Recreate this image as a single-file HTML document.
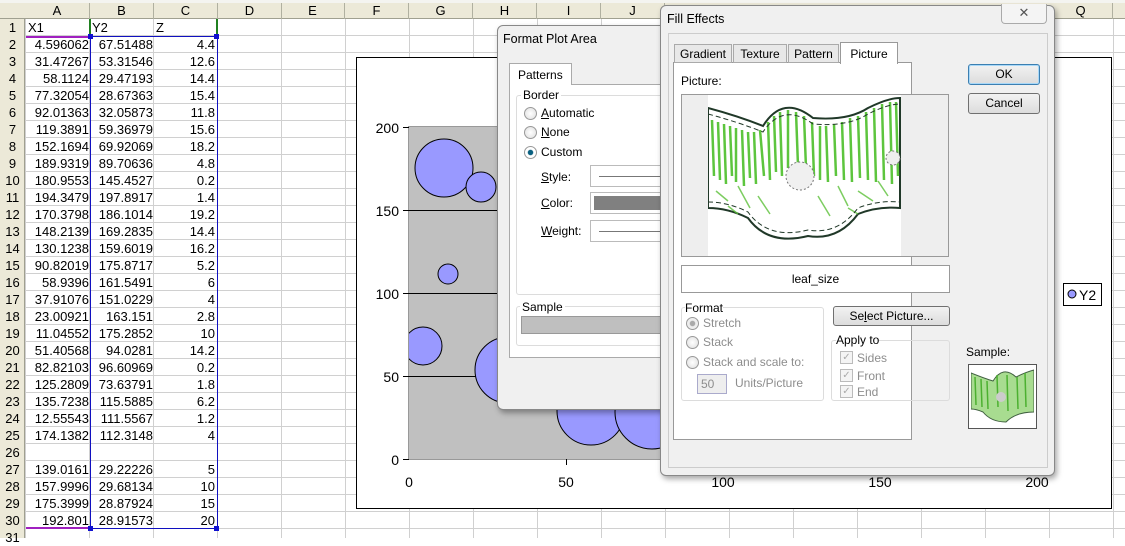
<!DOCTYPE html>
<html><head><meta charset="utf-8"><style>
*{margin:0;padding:0;box-sizing:border-box}
body{width:1125px;height:538px;overflow:hidden;background:#fff;position:relative;font-family:"Liberation Sans",sans-serif;}
.a{position:absolute}
.grid{left:0;top:0;width:1125px;height:538px;
background-image:repeating-linear-gradient(to bottom,transparent 0 1px,#d0d0d0 1px 2px,transparent 2px 17px),repeating-linear-gradient(to right,transparent 0 25px,#d0d0d0 25px 26px,transparent 26px 64px);}
.hdr{left:0;top:0;width:1125px;height:19px;background:#ece9d8;border-bottom:1px solid #a0a090;border-top:3px solid #f4f4f0}
.rh{left:0;top:19px;width:25px;height:519px;background:#ece9d8;border-right:1px solid #a0a090}
.ch{top:3px;height:16px;width:64px;text-align:center;font-size:13px;line-height:16px;color:#000;border-right:1px solid #b0b0a0}
.c{height:17px;font-size:13px;line-height:18px;text-align:right;white-space:nowrap}
.dlg{background:#f0f0f0;border:1px solid #888;border-radius:6px;box-shadow:2px 3px 6px rgba(0,0,0,.35)}
.t{font-size:12px;color:#000;white-space:nowrap}
.g{color:#8d8d8d}
.btn{border:1px solid #707070;border-radius:3px;background:linear-gradient(#f2f2f2,#dcdcdc);font-size:12px;text-align:center;line-height:18px}
.rad{width:13px;height:13px;border-radius:50%;border:1px solid #999;background:radial-gradient(#fff,#ddd)}
.chk{width:13px;height:13px;border:1px solid #bbb;background:#f4f4f4;font-size:10px;line-height:11px;text-align:center;color:#aaa}
.grp{border:1px solid #dcdcdc;border-radius:3px}
u{text-decoration:underline}
</style></head><body>
<div class="a grid"></div>
<div class="a hdr"></div>
<div class="a rh"></div>
<div class="a ch" style="left:25px;width:65px">A</div>
<div class="a ch" style="left:90px">B</div>
<div class="a ch" style="left:154px">C</div>
<div class="a ch" style="left:218px">D</div>
<div class="a ch" style="left:281px">E</div>
<div class="a ch" style="left:345px">F</div>
<div class="a ch" style="left:409px">G</div>
<div class="a ch" style="left:473px">H</div>
<div class="a ch" style="left:537px">I</div>
<div class="a ch" style="left:601px">J</div>
<div class="a ch" style="left:1049px">Q</div>
<div class="a" style="left:26px;top:19px;width:192px;height:510px">
<div class="c a" style="left:2px;top:0;text-align:left">X1</div>
<div class="c a" style="left:66px;top:0;text-align:left">Y2</div>
<div class="c a" style="left:130px;top:0;text-align:left">Z</div>
</div>
<div class="a" style="left:26px;top:36px;width:63px;font-size:13px;line-height:17px;text-align:right">4.596062<br>31.47267<br>58.1124<br>77.32054<br>92.01363<br>119.3891<br>152.1694<br>189.9319<br>180.9553<br>194.3479<br>170.3798<br>148.2139<br>130.1238<br>90.82019<br>58.9396<br>37.91076<br>23.00921<br>11.04552<br>51.40568<br>82.82103<br>125.2809<br>135.7238<br>12.55543<br>174.1382<br>&nbsp;<br>139.0161<br>157.9996<br>175.3999<br>192.801</div>
<div class="a" style="left:90px;top:36px;width:63px;font-size:13px;line-height:17px;text-align:right">67.51488<br>53.31546<br>29.47193<br>28.67363<br>32.05873<br>59.36979<br>69.92069<br>89.70636<br>145.4527<br>197.8917<br>186.1014<br>169.2835<br>159.6019<br>175.8717<br>161.5491<br>151.0229<br>163.151<br>175.2852<br>94.0281<br>96.60969<br>73.63791<br>115.5885<br>111.5567<br>112.3148<br>&nbsp;<br>29.22226<br>29.68134<br>28.87924<br>28.91573</div>
<div class="a" style="left:154px;top:36px;width:61px;font-size:13px;line-height:17px;text-align:right">4.4<br>12.6<br>14.4<br>15.4<br>11.8<br>15.6<br>18.2<br>4.8<br>0.2<br>1.4<br>19.2<br>14.4<br>16.2<br>5.2<br>6<br>4<br>2.8<br>10<br>14.2<br>0.2<br>1.8<br>6.2<br>1.2<br>4<br>&nbsp;<br>5<br>10<br>15<br>20</div>
<div class="a" style="left:0;top:19px;width:25px;font-size:13px;line-height:17px;text-align:center">1<br>2<br>3<br>4<br>5<br>6<br>7<br>8<br>9<br>10<br>11<br>12<br>13<br>14<br>15<br>16<br>17<br>18<br>19<br>20<br>21<br>22<br>23<br>24<br>25<br>26<br>27<br>28<br>29<br>30<br>31</div>
<div class="a" style="left:90px;top:36px;width:128px;height:493px;border:1px solid #1010c0"></div>
<div class="a" style="left:26px;top:36px;width:64px;height:493px;border-top:2px solid #a020c0;border-bottom:2px solid #a020c0"></div>
<div class="a" style="left:89px;top:19px;width:2px;height:17px;background:#208020"></div>
<div class="a" style="left:216px;top:19px;width:2px;height:17px;background:#208020"></div>
<div class="a" style="left:88px;top:34px;width:5px;height:5px;background:#1010d0"></div>
<div class="a" style="left:214px;top:34px;width:5px;height:5px;background:#1010d0"></div>
<div class="a" style="left:214px;top:526px;width:5px;height:5px;background:#1010d0"></div>
<div class="a" style="left:88px;top:526px;width:5px;height:5px;background:#1010d0"></div>

<div class="a" style="left:356px;top:57px;width:756px;height:452px;background:#fff;border:1px solid #000"></div>
<svg class="a" style="left:0;top:0" width="1125" height="538">
<defs><clipPath id="pc"><rect x="409" y="127" width="629" height="332"/></clipPath></defs>
<rect x="409" y="127" width="629" height="332" fill="#c0c0c0"/>
<g stroke="#000" stroke-width="1"><line x1="409" y1="210.5" x2="1038" y2="210.5"/><line x1="409" y1="293.5" x2="1038" y2="293.5"/><line x1="409" y1="376.5" x2="1038" y2="376.5"/></g>
<g clip-path="url(#pc)" fill="#9999ff" stroke="#000" stroke-width="1">
<circle cx="444" cy="168" r="29"/><circle cx="481" cy="187" r="15"/><circle cx="448" cy="274" r="10"/><circle cx="423" cy="346" r="19"/><circle cx="508" cy="370" r="33"/><circle cx="591" cy="411" r="34"/><circle cx="652" cy="412" r="37"/>
</g>
<rect x="408.5" y="126.5" width="630" height="333" fill="none" stroke="#333" stroke-dasharray="1 1"/>
<g stroke="#000"><line x1="403" y1="127.5" x2="409" y2="127.5"/><line x1="403" y1="210.5" x2="409" y2="210.5"/><line x1="403" y1="293.5" x2="409" y2="293.5"/><line x1="403" y1="376.5" x2="409" y2="376.5"/><line x1="403" y1="459.5" x2="409" y2="459.5"/>
<line x1="566.5" y1="459" x2="566.5" y2="465"/><line x1="723.5" y1="459" x2="723.5" y2="465"/><line x1="880.5" y1="459" x2="880.5" y2="465"/><line x1="1037.5" y1="459" x2="1037.5" y2="465"/></g>
<g font-family="Liberation Sans" font-size="14" text-anchor="end"><text x="399" y="133">200</text><text x="399" y="216">150</text><text x="399" y="299">100</text><text x="399" y="382">50</text><text x="399" y="465">0</text></g>
<g font-family="Liberation Sans" font-size="14" text-anchor="middle"><text x="409" y="487">0</text><text x="566" y="487">50</text><text x="723" y="487">100</text><text x="880" y="487">150</text><text x="1037" y="487">200</text></g>
<rect x="1063.5" y="283.5" width="38" height="22" fill="#fff" stroke="#000"/>
<circle cx="1072" cy="294" r="4" fill="#9999ff" stroke="#000"/>
<text x="1079" y="300" font-family="Liberation Sans" font-size="14">Y2</text>
</svg>

<div class="a dlg" style="left:497px;top:25px;width:180px;height:385px"></div>
<div class="a t" style="left:503px;top:32px;font-size:12.5px">Format Plot Area</div>
<div class="a" style="left:509px;top:84px;width:170px;height:274px;background:#fff;border:1px solid #aaa"></div>
<div class="a" style="left:509px;top:63px;width:63px;height:22px;background:#fff;border:1px solid #aaa;border-bottom:none"></div>
<div class="a t" style="left:518px;top:68px">Patterns</div>
<div class="a grp" style="left:516px;top:95px;width:160px;height:200px"></div>
<div class="a t" style="left:521px;top:88px;background:#fff;padding:0 2px">Border</div>
<div class="a rad" style="left:524px;top:107px"></div><div class="a t" style="left:541px;top:106px"><u>A</u>utomatic</div>
<div class="a rad" style="left:524px;top:126px"></div><div class="a t" style="left:541px;top:125px"><u>N</u>one</div>
<div class="a rad" style="left:524px;top:146px;background:radial-gradient(#0a6080 30%,#fff 40%)"></div><div class="a t" style="left:541px;top:145px">Custom</div>
<div class="a t" style="left:541px;top:170px"><u>S</u>tyle:</div>
<div class="a" style="left:590px;top:165px;width:80px;height:22px;border:1px solid #bbb;background:#fff"><div class="a" style="left:8px;top:10px;width:70px;height:1px;background:#777"></div></div>
<div class="a t" style="left:541px;top:196px"><u>C</u>olor:</div>
<div class="a" style="left:590px;top:192px;width:80px;height:22px;border:1px solid #bbb;background:#fff"><div class="a" style="left:3px;top:3px;width:76px;height:14px;background:#808080"></div></div>
<div class="a t" style="left:541px;top:224px"><u>W</u>eight:</div>
<div class="a" style="left:590px;top:220px;width:80px;height:22px;border:1px solid #bbb;background:#fff"><div class="a" style="left:8px;top:10px;width:70px;height:1px;background:#777"></div></div>
<div class="a grp" style="left:516px;top:306px;width:160px;height:40px"></div>
<div class="a t" style="left:520px;top:300px;background:#fff;padding:0 2px">Sample</div>
<div class="a" style="left:521px;top:316px;width:150px;height:18px;background:#bfbfbf;border:1px solid #999"></div>

<div class="a dlg" style="left:660px;top:5px;width:395px;height:471px"></div>
<div class="a t" style="left:667px;top:12px;font-size:12.5px">Fill Effects</div>
<div class="a" style="left:1001px;top:4px;width:46px;height:20px;border:1px solid #aaa;border-top:none;border-radius:0 0 4px 4px;background:#f4f4f4;text-align:center;font-size:13px;color:#555;line-height:18px">✕</div>
<div class="a" style="left:668px;top:33px;width:380px;height:435px;border:1px solid #ccc;background:#f0f0f0"></div>
<div class="a" style="left:673px;top:62px;width:239px;height:378px;background:#fff;border:1px solid #999"></div>
<div class="a t" style="left:674px;top:44px;width:58px;height:19px;border:1px solid #aaa;background:#e8e8e8;text-align:center;line-height:19px">Gradient</div>
<div class="a t" style="left:733px;top:44px;width:54px;height:19px;border:1px solid #aaa;background:#e8e8e8;text-align:center;line-height:19px">Texture</div>
<div class="a t" style="left:788px;top:44px;width:51px;height:19px;border:1px solid #aaa;background:#e8e8e8;text-align:center;line-height:19px">Pattern</div>
<div class="a t" style="left:840px;top:42px;width:58px;height:22px;border:1px solid #999;border-bottom:none;background:#fff;text-align:center;line-height:22px">Picture</div>
<div class="a t" style="left:681px;top:74px">Picture:</div>
<div class="a" style="left:681px;top:94px;width:268px;height:163px;border:1px solid #999;background:#eeeeee"></div>
<div class="a" style="left:708px;top:95px;width:193px;height:161px;background:#fff"></div>
<svg class="a" style="left:708px;top:96px" width="193" height="159" viewBox="0 0 193 159">
<path d="M0 12 Q30 20 55 30 Q75 -2 105 22 Q140 25 160 12 Q180 2 192 2 L192 112 Q170 110 150 118 Q130 145 100 140 Q60 150 40 122 Q20 112 0 112 Z" fill="#fff" stroke="#203828" stroke-width="2"/>
<g stroke="#4cbf2a" stroke-width="2.5" opacity="0.9">
<path d="M4 24 L6 80 M10 26 L12 84 M16 28 L18 88 M22 30 L24 80 M28 32 L28 86 M34 34 L36 90 M40 36 L42 82 M46 36 L48 88 M52 34 L56 80 M60 26 L62 84 M66 20 L68 76 M72 16 L74 80 M80 14 L80 72 M88 16 L90 70 M96 20 L98 72 M104 26 L106 80 M112 30 L112 84 M118 30 L120 86 M126 28 L128 80 M134 26 L136 84 M142 22 L144 86 M150 20 L152 82 M158 16 L160 84 M166 12 L168 86 M174 8 L176 84 M182 6 L184 88 M188 6 L190 80"/>
</g>
<g stroke="#5cc03a" stroke-width="1.5" fill="none" opacity="0.8">
<path d="M8 95 L20 105 M30 90 L42 112 M50 100 L62 118 M110 100 L122 120 M130 90 L140 110 M150 95 L165 105 M170 85 L180 100 M20 110 L30 118 M140 112 L150 118"/>
</g>
<circle cx="92" cy="80" r="14" fill="#f0f0f0" stroke="#777" stroke-dasharray="2 2"/>
<circle cx="185" cy="62" r="7" fill="#eee" stroke="#777" stroke-dasharray="2 2"/>
<path d="M0 18 Q30 26 55 36 Q75 6 105 28 Q140 31 160 18 Q180 8 192 8" fill="none" stroke="#203828" stroke-width="1" stroke-dasharray="5 3"/>
<path d="M0 106 Q20 106 40 116 Q60 144 100 134 Q130 139 150 112 Q170 104 192 106" fill="none" stroke="#203828" stroke-width="1" stroke-dasharray="5 3"/>
</svg>
<div class="a" style="left:681px;top:265px;width:269px;height:28px;border:1px solid #999;background:#fff;text-align:center;font-size:12px;line-height:26px">leaf_size</div>
<div class="a grp" style="left:681px;top:307px;width:143px;height:94px"></div>
<div class="a t" style="left:685px;top:301px;background:#fff">Format</div>
<div class="a rad" style="left:686px;top:317px;background:radial-gradient(#aaa 30%,#eee 40%)"></div><div class="a t g" style="left:703px;top:316px">Stretch</div>
<div class="a rad" style="left:686px;top:336px"></div><div class="a t g" style="left:703px;top:335px">Stack</div>
<div class="a rad" style="left:686px;top:356px"></div><div class="a t g" style="left:703px;top:355px">Stack and scale to:</div>
<div class="a t g" style="left:697px;top:374px;width:30px;height:20px;border:1px solid #aac;background:#eee;line-height:18px;padding-left:3px">50</div>
<div class="a t g" style="left:735px;top:376px">Units/Picture</div>
<div class="a btn" style="left:833px;top:306px;width:117px;height:20px">Se<u>l</u>ect Picture...</div>
<div class="a grp" style="left:831px;top:340px;width:119px;height:61px"></div>
<div class="a t" style="left:836px;top:333px;background:#fff">Apply to</div>
<div class="a chk" style="left:840px;top:351px">✓</div><div class="a t g" style="left:857px;top:351px">Sides</div>
<div class="a chk" style="left:840px;top:369px">✓</div><div class="a t g" style="left:857px;top:369px">Front</div>
<div class="a chk" style="left:840px;top:385px">✓</div><div class="a t g" style="left:857px;top:385px">End</div>
<div class="a btn" style="left:968px;top:64px;width:72px;height:21px;border-color:#3c7fb1;box-shadow:0 0 0 1px #a8d8f8 inset">OK</div>
<div class="a btn" style="left:968px;top:93px;width:72px;height:21px">Cancel</div>
<div class="a t" style="left:966px;top:345px">Sample:</div>
<div class="a" style="left:968px;top:364px;width:69px;height:65px;border:1px solid #555;background:#fff"></div>
<svg class="a" style="left:971px;top:367px" width="63" height="59" viewBox="0 0 63 59">
<path d="M0 6 Q15 12 22 14 Q32 -2 45 10 Q55 5 63 3 L63 45 Q45 45 35 55 Q20 55 12 45 Q5 42 0 42Z" fill="#a8dc90" stroke="#406040"/>
<path d="M4 10 L5 38 M10 12 L11 40 M16 14 L17 42 M26 8 L27 40 M36 8 L37 44 M46 10 L47 42 M54 6 L55 40" stroke="#4cb030" stroke-width="1.5"/>
<circle cx="30" cy="30" r="5" fill="#ccc"/>
</svg>
</body></html>
